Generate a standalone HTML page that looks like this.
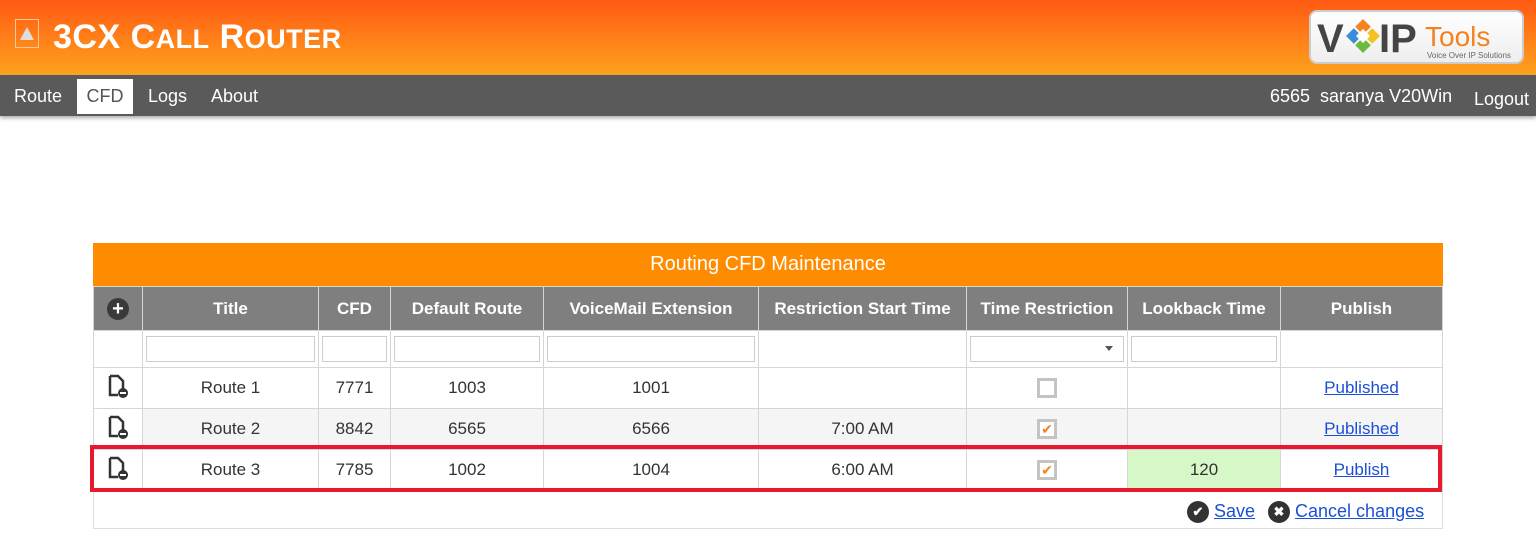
<!DOCTYPE html>
<html><head><style>
body{margin:0;width:1536px;height:559px;background:#fff;font-family:"Liberation Sans",sans-serif;position:relative;overflow:hidden}
.hdr{position:absolute;left:0;top:0;width:1536px;height:75px;background:linear-gradient(#ff5a14,#ffa21c)}
.tri{position:absolute;left:15px;top:19px;width:24px;height:29px;border:1px solid #f9c89a;box-sizing:border-box}
.tri:after{content:"";position:absolute;left:4px;top:7px;border-left:7px solid transparent;border-right:7px solid transparent;border-bottom:13px solid #ddd}
.ttl{position:absolute;left:53px;top:18px;color:#fff;font-weight:bold;font-size:34px;letter-spacing:0.5px}
.ttl small{font-size:27px}
.logo{position:absolute;left:1309px;top:10px;width:215px;height:54px;background:linear-gradient(#fff,#eee);border:2px solid #ccc;border-radius:8px;box-sizing:border-box}
.nav{position:absolute;left:0;top:75px;width:1536px;height:41px;background:#5a5a5a;box-shadow:0 2px 4px #aaa;color:#fff;font-size:18px}
.nav span{position:absolute;top:11px}
.cfd{position:absolute;left:77px;top:4px;width:56px;height:35px;background:#fff;color:#555;text-align:center;line-height:35px}
.tbl{position:absolute;left:93px;top:243px;width:1350px;height:286px;border:1px solid #ddd;box-sizing:border-box}
.bar{position:absolute;left:93px;top:243px;width:1350px;height:43px;background:#ff8c00;color:#fff;font-size:20px;text-align:center;line-height:43px}
table{position:absolute;left:93px;top:286px;border-collapse:collapse;width:1350px;font-size:17px;color:#333}
td,th{border:1px solid #d6d6d6;text-align:center;padding:0}
th{background:#7f7f7f;color:#fff;height:43px;font-size:17px}
.f td{height:36px}
.f input{width:calc(100% - 6px);height:26px;box-sizing:border-box;border:1px solid #ccc;display:block;margin:0 auto}
.r td{height:40px}
.alt td{background:#f5f5f5}
a{color:#1a4fd6;text-decoration:underline}
.cb{display:inline-block;width:20px;height:20px;border:3px solid #c4c4c4;box-sizing:border-box;vertical-align:middle;color:#f58220;font-size:14px;line-height:14px;background:#fff}
.red{position:absolute;left:90px;top:445px;width:1352px;height:47px;border:4px solid #e8192c;box-sizing:border-box}
.ft{position:absolute;top:501px;font-size:18px}
.ci{display:inline-block;width:22px;height:22px;border-radius:50%;background:#333;color:#fff;font-size:13px;text-align:center;line-height:22px;vertical-align:middle;font-weight:bold}
</style></head><body>
<div class="hdr"><div class="tri"></div><div class="ttl">3CX C<small>ALL</small> R<small>OUTER</small></div>
<div class="logo"><svg width="211" height="50" style="position:absolute;left:0;top:0">
<text x="6" y="40" font-family="Liberation Sans" font-weight="bold" font-size="40" fill="#444">V</text>
<g transform="translate(52,24) rotate(45)"><rect x="-12" y="-12" width="11" height="11" fill="#f5821f"/><rect x="1" y="-12" width="11" height="11" fill="#f5c21f"/><rect x="-12" y="1" width="11" height="11" fill="#3a8dd8"/><rect x="1" y="1" width="11" height="11" fill="#6cbb3c"/><rect x="-5" y="-5" width="10" height="10" fill="#fff"/></g>
<text x="68" y="40" font-family="Liberation Sans" font-weight="bold" font-size="40" fill="#444">IP</text>
<text x="114" y="34" font-family="Liberation Sans" font-size="28" fill="#f5821f">Tools</text>
<text x="116" y="46" font-family="Liberation Sans" font-size="8" fill="#666">Voice Over IP Solutions</text></svg></div></div>
<div class="nav"><span style="left:14px">Route</span><div class="cfd">CFD</div><span style="left:148px">Logs</span><span style="left:211px">About</span><span style="left:1270px">6565&nbsp; saranya V20Win</span><span style="left:1474px;top:14px">Logout</span></div>
<div class="tbl"></div>
<div class="bar">Routing CFD Maintenance</div>
<table>
<tr><th style="width:48px"><span class="ci" style="background:#3a3a3a;font-size:20px">+</span></th><th style="width:175px">Title</th><th style="width:71px">CFD</th><th style="width:152px">Default Route</th><th style="width:214px">VoiceMail Extension</th><th style="width:207px">Restriction Start Time</th><th style="width:160px">Time Restriction</th><th style="width:152px">Lookback Time</th><th>Publish</th></tr>
<tr class="f"><td></td><td><input></td><td><input></td><td><input></td><td><input></td><td></td><td><div style="position:relative"><input><span style="position:absolute;right:14px;top:10px;border-left:4px solid transparent;border-right:4px solid transparent;border-top:5px solid #555"></span></div></td><td><input></td><td></td></tr>
<tr class="r"><td><svg width="24" height="26" viewBox="0 0 24 26"><path d="M4 3h8l5 5v9M4 3v19h8" fill="none" stroke="#333" stroke-width="2.5"/><circle cx="17" cy="20" r="5" fill="#333"/><path d="M14 20h6" stroke="#fff" stroke-width="2"/></svg></td><td>Route 1</td><td>7771</td><td>1003</td><td>1001</td><td></td><td><span class="cb"></span></td><td></td><td><a>Published</a></td></tr>
<tr class="r alt"><td style="background:#fff"><svg width="24" height="26" viewBox="0 0 24 26"><path d="M4 3h8l5 5v9M4 3v19h8" fill="none" stroke="#333" stroke-width="2.5"/><circle cx="17" cy="20" r="5" fill="#333"/><path d="M14 20h6" stroke="#fff" stroke-width="2"/></svg></td><td>Route 2</td><td>8842</td><td>6565</td><td>6566</td><td>7:00 AM</td><td><span class="cb">✔</span></td><td></td><td><a>Published</a></td></tr>
<tr class="r"><td><svg width="24" height="26" viewBox="0 0 24 26"><path d="M4 3h8l5 5v9M4 3v19h8" fill="none" stroke="#333" stroke-width="2.5"/><circle cx="17" cy="20" r="5" fill="#333"/><path d="M14 20h6" stroke="#fff" stroke-width="2"/></svg></td><td>Route 3</td><td>7785</td><td>1002</td><td>1004</td><td>6:00 AM</td><td><span class="cb">✔</span></td><td style="background:#d6f7c8">120</td><td><a>Publish</a></td></tr>
</table>
<div class="red"></div>
<div class="ft" style="left:1187px"><span class="ci">✔</span> <a>Save</a></div>
<div class="ft" style="left:1268px"><span class="ci">✖</span> <a>Cancel changes</a></div>
</body></html>
